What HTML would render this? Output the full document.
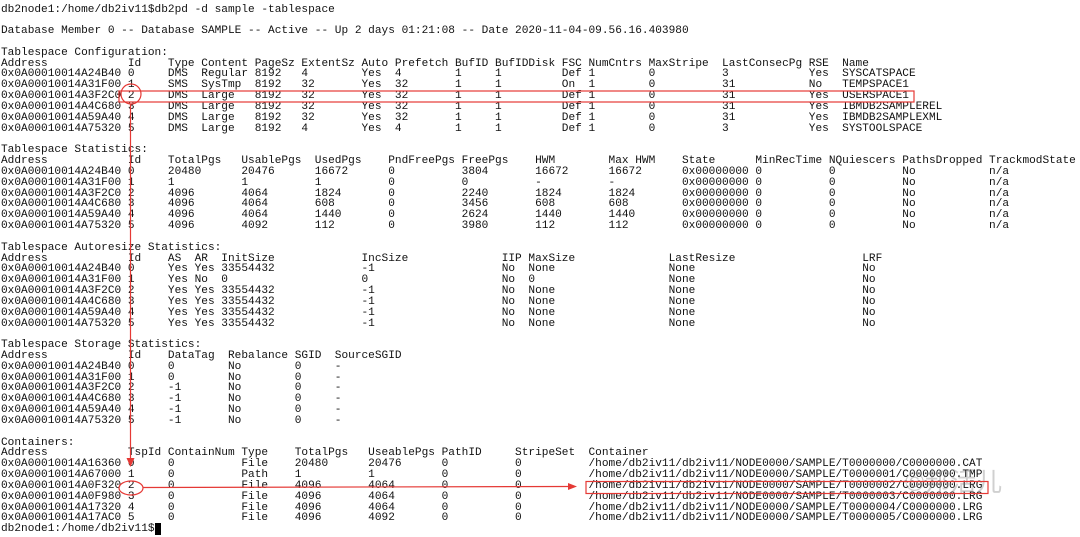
<!DOCTYPE html>
<html><head><meta charset="utf-8">
<style>
html,body{margin:0;padding:0;background:#fff;width:1080px;height:537px;overflow:hidden;}
pre{position:absolute;left:1px;top:4.5px;margin:0;font-family:"Liberation Mono",monospace;font-size:11.13px;line-height:10.83px;color:#111;white-space:pre;}
.cur{background:#000;}
svg{position:absolute;left:0;top:0;}
.wm{position:absolute;left:905px;top:462px;font-family:"Liberation Sans","Noto Sans CJK SC",sans-serif;font-size:26px;color:rgba(120,120,120,0.35);}
</style></head><body>
<pre>db2node1:/home/db2iv11$db2pd -d sample -tablespace

Database Member 0 -- Database SAMPLE -- Active -- Up 2 days 01:21:08 -- Date 2020-11-04-09.56.16.403980

Tablespace Configuration:
Address            Id    Type Content PageSz ExtentSz Auto Prefetch BufID BufIDDisk FSC NumCntrs MaxStripe  LastConsecPg RSE  Name
0x0A00010014A24B40 0     DMS  Regular 8192   4        Yes  4        1     1         Def 1        0          3            Yes  SYSCATSPACE
0x0A00010014A31F00 1     SMS  SysTmp  8192   32       Yes  32       1     1         On  1        0          31           No   TEMPSPACE1
0x0A00010014A3F2C0 2     DMS  Large   8192   32       Yes  32       1     1         Def 1        0          31           Yes  USERSPACE1
0x0A00010014A4C680 3     DMS  Large   8192   32       Yes  32       1     1         Def 1        0          31           Yes  IBMDB2SAMPLEREL
0x0A00010014A59A40 4     DMS  Large   8192   32       Yes  32       1     1         Def 1        0          31           Yes  IBMDB2SAMPLEXML
0x0A00010014A75320 5     DMS  Large   8192   4        Yes  4        1     1         Def 1        0          3            Yes  SYSTOOLSPACE

Tablespace Statistics:
Address            Id    TotalPgs   UsablePgs  UsedPgs    PndFreePgs FreePgs    HWM        Max HWM    State      MinRecTime NQuiescers PathsDropped TrackmodState
0x0A00010014A24B40 0     20480      20476      16672      0          3804       16672      16672      0x00000000 0          0          No           n/a
0x0A00010014A31F00 1     1          1          1          0          0          -          -          0x00000000 0          0          No           n/a
0x0A00010014A3F2C0 2     4096       4064       1824       0          2240       1824       1824       0x00000000 0          0          No           n/a
0x0A00010014A4C680 3     4096       4064       608        0          3456       608        608        0x00000000 0          0          No           n/a
0x0A00010014A59A40 4     4096       4064       1440       0          2624       1440       1440       0x00000000 0          0          No           n/a
0x0A00010014A75320 5     4096       4092       112        0          3980       112        112        0x00000000 0          0          No           n/a

Tablespace Autoresize Statistics:
Address            Id    AS  AR  InitSize             IncSize              IIP MaxSize              LastResize                   LRF
0x0A00010014A24B40 0     Yes Yes 33554432             -1                   No  None                 None                         No
0x0A00010014A31F00 1     Yes No  0                    0                    No  0                    None                         No
0x0A00010014A3F2C0 2     Yes Yes 33554432             -1                   No  None                 None                         No
0x0A00010014A4C680 3     Yes Yes 33554432             -1                   No  None                 None                         No
0x0A00010014A59A40 4     Yes Yes 33554432             -1                   No  None                 None                         No
0x0A00010014A75320 5     Yes Yes 33554432             -1                   No  None                 None                         No

Tablespace Storage Statistics:
Address            Id    DataTag  Rebalance SGID  SourceSGID
0x0A00010014A24B40 0     0        No        0     -
0x0A00010014A31F00 1     0        No        0     -
0x0A00010014A3F2C0 2     -1       No        0     -
0x0A00010014A4C680 3     -1       No        0     -
0x0A00010014A59A40 4     -1       No        0     -
0x0A00010014A75320 5     -1       No        0     -

Containers:
Address            TspId ContainNum Type    TotalPgs   UseablePgs PathID     StripeSet  Container
0x0A00010014A16360 0     0          File    20480      20476      0          0          /home/db2iv11/db2iv11/NODE0000/SAMPLE/T0000000/C0000000.CAT
0x0A00010014A67000 1     0          Path    1          1          0          0          /home/db2iv11/db2iv11/NODE0000/SAMPLE/T0000001/C0000000.TMP
0x0A00010014A0F320 2     0          File    4096       4064       0          0          /home/db2iv11/db2iv11/NODE0000/SAMPLE/T0000002/C0000000.LRG
0x0A00010014A0F980 3     0          File    4096       4064       0          0          /home/db2iv11/db2iv11/NODE0000/SAMPLE/T0000003/C0000000.LRG
0x0A00010014A17320 4     0          File    4096       4064       0          0          /home/db2iv11/db2iv11/NODE0000/SAMPLE/T0000004/C0000000.LRG
0x0A00010014A17AC0 5     0          File    4096       4092       0          0          /home/db2iv11/db2iv11/NODE0000/SAMPLE/T0000005/C0000000.LRG
db2node1:/home/db2iv11$<span class="cur"> </span></pre>
<div class="wm">©邦活儿</div>
<svg width="1080" height="537" viewBox="0 0 1080 537">
<g fill="none" stroke="#e53935" stroke-width="1.2">
<rect x="119" y="91" width="795" height="11"/>
<ellipse cx="131" cy="94" rx="10" ry="10"/>
<line x1="130.5" y1="104" x2="130.5" y2="462"/>
<ellipse cx="131" cy="488" rx="12" ry="7"/>
<line x1="143" y1="487.5" x2="570" y2="486.5"/>
<rect x="586" y="481.5" width="402" height="12"/>
</g>
<g fill="#e53935">
<polygon points="126.5,458 134.5,458 130.5,467"/>
<polygon points="568,483 568,490 577,486.5"/>
</g>
</svg>
</body></html>
